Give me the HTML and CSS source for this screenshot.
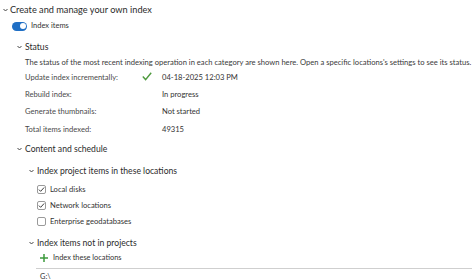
FILE: index.html
```html
<!DOCTYPE html>
<html>
<head>
<meta charset="utf-8">
<link rel="stylesheet" href="styles.css">
</head>
<body>
<div class="page">
  <div class="sec-head h1">
    <svg class="chev" width="5" height="4" viewBox="0 0 5 4"><path d="M0.5 1 L2.5 3 L4.5 1" fill="none" stroke="#444" stroke-width="1"/></svg>
    <span>Create and manage your own index</span>
  </div>
  <div class="toggle-row">
    <span class="toggle"><span class="knob"></span></span>
    <span>Index items</span>
  </div>
  <div class="sec-head h2">
    <svg class="chev" width="5" height="4" viewBox="0 0 5 4"><path d="M0.5 1 L2.5 3 L4.5 1" fill="none" stroke="#444" stroke-width="1"/></svg>
    <span>Status</span>
  </div>
  <div class="desc">The status of the most recent indexing operation in each category are shown here. Open a specific locations's settings to see its status.</div>
  <div class="status-grid">
    <div class="lbl">Update index incrementally:</div>
    <div class="ico"><svg width="10" height="9" viewBox="0 0 10 9"><path d="M0.8 4.6 L3.6 7.6 L9.2 0.8" fill="none" stroke="#4e9a3e" stroke-width="1.4"/></svg></div>
    <div class="val">04-18-2025 12:03 PM</div>
    <div class="lbl">Rebuild index:</div>
    <div class="ico"></div>
    <div class="val">In progress</div>
    <div class="lbl">Generate thumbnails:</div>
    <div class="ico"></div>
    <div class="val">Not started</div>
    <div class="lbl">Total items indexed:</div>
    <div class="ico"></div>
    <div class="val">49315</div>
  </div>
  <div class="sec-head h2 content">
    <svg class="chev" width="5" height="4" viewBox="0 0 5 4"><path d="M0.5 1 L2.5 3 L4.5 1" fill="none" stroke="#444" stroke-width="1"/></svg>
    <span>Content and schedule</span>
  </div>
  <div class="sec-head h3">
    <svg class="chev" width="5" height="4" viewBox="0 0 5 4"><path d="M0.5 1 L2.5 3 L4.5 1" fill="none" stroke="#444" stroke-width="1"/></svg>
    <span>Index project items in these locations</span>
  </div>
  <div class="checks">
    <div class="check-row"><span class="box"><svg width="8" height="7" viewBox="0 0 8 7"><path d="M1 3.6 L3 5.6 L7 1.2" fill="none" stroke="#333" stroke-width="1.1"/></svg></span><span>Local disks</span></div>
    <div class="check-row"><span class="box"><svg width="8" height="7" viewBox="0 0 8 7"><path d="M1 3.6 L3 5.6 L7 1.2" fill="none" stroke="#333" stroke-width="1.1"/></svg></span><span>Network locations</span></div>
    <div class="check-row"><span class="box"></span><span>Enterprise geodatabases</span></div>
  </div>
  <div class="sec-head h3 notin">
    <svg class="chev" width="5" height="4" viewBox="0 0 5 4"><path d="M0.5 1 L2.5 3 L4.5 1" fill="none" stroke="#444" stroke-width="1"/></svg>
    <span>Index items not in projects</span>
  </div>
  <div class="add-row">
    <svg width="8" height="8" viewBox="0 0 8 8"><path d="M4 0 V8 M0 4 H8" stroke="#3c9a3c" stroke-width="1.5"/></svg>
    <span>Index these locations</span>
  </div>
  <div class="list">
    <div class="list-item">G:\</div>
  </div>
</div>
</body>
</html>
```

FILE: styles.css
```css
html, body {
  margin: 0;
  padding: 0;
  background: #ffffff;
}
body {
  width: 474px;
  height: 280px;
  overflow: hidden;
  font-family: "Lato", "Open Sans", sans-serif;
  color: #333333;
}
.page {
  display: flex;
  flex-direction: column;
}
.sec-head {
  display: flex;
  align-items: center;
  gap: 2px;
  color: #2b2b2b;
}
.chev {
  flex: none;
}
.h1 {
  font-size: 9.2px;
  padding: 3px 0 0 3px;
  height: 14px;
  line-height: 14px;
}
.toggle-row {
  display: flex;
  align-items: center;
  gap: 4px;
  padding: 4px 0 0 12px;
  font-size: 7.5px;
  height: 10px;
  line-height: 10px;
}
.toggle {
  width: 15px;
  height: 9px;
  border-radius: 5px;
  background: #1f6fc5;
  display: flex;
  justify-content: flex-end;
  align-items: center;
  padding-right: 1.5px;
  box-sizing: border-box;
}
.knob {
  width: 6px;
  height: 6px;
  border-radius: 50%;
  background: #fff;
}
.h2 {
  font-size: 8.6px;
  padding: 10px 0 0 17px;
  height: 12px;
  line-height: 12px;
}
.h2 .chev, .h3 .chev {
  margin-right: 1px;
}
.desc {
  font-size: 7.6px;
  padding: 4px 0 0 25px;
  white-space: nowrap;
  color: #3a3a3a;
  line-height: 10px;
}
.status-grid {
  display: grid;
  grid-template-columns: 117px 20px auto;
  grid-auto-rows: 17.3px;
  padding: 1px 0 0 25px;
  font-size: 7.6px;
  align-items: center;
}
.lbl {
  color: #4a4a4a;
}
.ico {
  display: flex;
  align-items: center;
}
.content {
  padding-top: 6px;
}
.h3 {
  font-size: 8.6px;
  padding: 10px 0 0 29px;
  height: 12px;
  line-height: 12px;
}
.checks {
  display: flex;
  flex-direction: column;
  padding: 4px 0 0 37px;
}
.check-row {
  display: flex;
  align-items: center;
  gap: 4px;
  height: 16px;
  font-size: 7.6px;
}
.box {
  width: 9px;
  height: 9px;
  border: 1px solid #9a9a9a;
  border-radius: 2px;
  box-sizing: border-box;
  display: flex;
  align-items: center;
  justify-content: center;
}
.notin {
  padding-top: 8px;
}
.add-row {
  display: flex;
  align-items: center;
  gap: 5px;
  padding: 3px 0 0 40px;
  font-size: 7.4px;
  height: 11px;
}
.list {
  margin: 4.5px 2px 0 36px;
  border-top: 1px solid #cfcfcf;
}
.list-item {
  font-size: 7.4px;
  padding: 3px 0 0 4px;
  line-height: 9px;
}
```
